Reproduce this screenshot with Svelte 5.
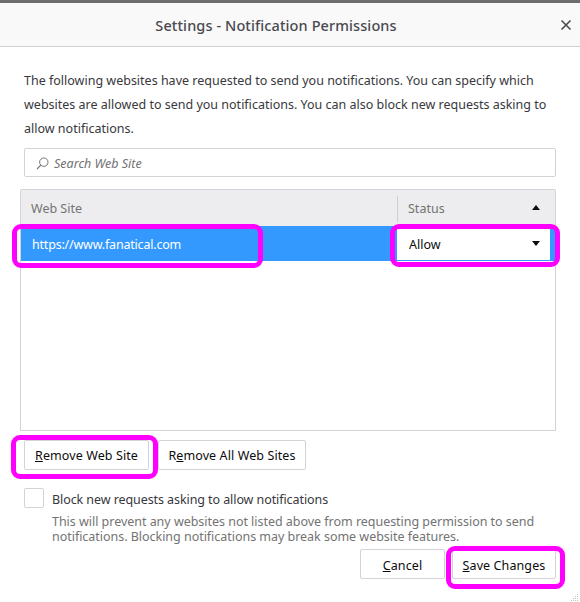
<script>
  const marks = [
    { x: 12, y: 221, w: 251, h: 44 },
    { x: 390, y: 221, w: 170, h: 43 },
    { x: 11, y: 432, w: 147, h: 44 },
    { x: 446, y: 543, w: 119, h: 43 }
  ];
</script>

<div class="dialog">
  <header class="head">
    <h1>Settings - Notification Permissions</h1>
    <svg class="close" width="12" height="12" viewBox="0 0 12 12" aria-hidden="true">
      <path d="M1.5 1.5 L10.5 10.5 M10.5 1.5 L1.5 10.5" stroke="#4a4a4f" stroke-width="1.6" fill="none" />
    </svg>
  </header>

  <main class="body">
    <p class="intro">The following websites have requested to send you notifications. You can specify which websites are allowed to send you notifications. You can also block new requests asking to allow notifications.</p>

    <div class="search">
      <svg width="13" height="13" viewBox="0 0 13 13" aria-hidden="true">
        <circle cx="7.8" cy="5.2" r="4.2" stroke="#737373" stroke-width="1" fill="none" />
        <path d="M4.8 8.2 L1 12" stroke="#737373" stroke-width="1.1" fill="none" />
      </svg>
      <span>Search Web Site</span>
    </div>

    <div class="table">
      <div class="thead">
        <div class="th site">Web Site</div>
        <div class="th status">
          <span>Status</span>
          <i class="up"></i>
        </div>
      </div>
      <div class="row">
        <div class="url">https://www.fanatical.com</div>
        <div class="select">
          <span>Allow</span>
          <i class="down"></i>
        </div>
      </div>
    </div>

    <div class="actions">
      <button><u>R</u>emove Web Site</button>
      <button class="all">R<u>e</u>move All Web Sites</button>
    </div>

    <div class="block">
      <span class="check"></span>
      <div>
        <div class="label">Block new requests asking to allow notifications</div>
        <div class="desc">This will prevent any websites not listed above from requesting permission to send notifications. Blocking notifications may break some website features.</div>
      </div>
    </div>

    <div class="foot">
      <button class="cancel"><u>C</u>ancel</button>
      <button class="save"><u>S</u>ave Changes</button>
    </div>
  </main>

  <svg class="grip" width="10" height="10" viewBox="0 0 10 10" aria-hidden="true">
    <g fill="#c4c4c8">
      <rect x="8" y="2" width="1" height="1" /><rect x="6" y="4" width="1" height="1" /><rect x="8" y="4" width="1" height="1" />
      <rect x="4" y="6" width="1" height="1" /><rect x="6" y="6" width="1" height="1" /><rect x="8" y="6" width="1" height="1" />
      <rect x="2" y="8" width="1" height="1" /><rect x="4" y="8" width="1" height="1" /><rect x="6" y="8" width="1" height="1" /><rect x="8" y="8" width="1" height="1" />
    </g>
  </svg>

  {#each marks as m}
    <div class="mark" style="left:{m.x}px;top:{m.y}px;width:{m.w}px;height:{m.h}px"></div>
  {/each}
</div>

<style>
  :global(body) {
    margin: 0;
    background: #fff;
  }
  .dialog {
    position: relative;
    width: 580px;
    height: 602px;
    overflow: hidden;
    background: #fff;
    border-top: 3px solid #6d6d70;
    box-sizing: border-box;
    font-family: "Noto Sans", "Open Sans", sans-serif;
    font-size: 12.5px;
    color: #38383d;
  }
  .head {
    height: 44px;
    box-sizing: border-box;
    background: #f9f9fa;
    border-bottom: 1px solid #d0d0d2;
    display: flex;
    align-items: center;
    justify-content: center;
    padding: 1px 28px 0 0;
    position: relative;
  }
  h1 {
    margin: 0;
    font-size: 14.5px;
    font-weight: 500;
    color: #4a4a4f;
    letter-spacing: 0.1px;
  }
  .close {
    position: absolute;
    left: 560px;
    top: 16px;
  }
  .body {
    padding: 22px 24px 0;
    display: flex;
    flex-direction: column;
  }
  .intro {
    margin: 0;
    line-height: 24px;
    height: 72px;
  }
  .search {
    margin-top: 7px;
    height: 29px;
    box-sizing: border-box;
    border: 1px solid #d2d2d8;
    border-radius: 2px;
    display: flex;
    align-items: center;
    gap: 5px;
    padding: 1px 0 0 11px;
    font-style: italic;
    color: #737373;
    font-size: 12.5px;
  }
  .table {
    margin: 12px 0 0 -4px;
    height: 242px;
    box-sizing: border-box;
    border: 1px solid #d2d2d8;
    border-radius: 2px 2px 0 0;
    display: flex;
    flex-direction: column;
  }
  .thead {
    display: flex;
    height: 36px;
    background: #ededf0;
    align-items: center;
    color: #737373;
  }
  .th.site {
    flex: 1;
    padding-left: 10px;
  }
  .th.status {
    width: 158px;
    box-sizing: border-box;
    height: 26px;
    margin-top: 1px;
    border-left: 1px solid #cfcfd3;
    padding: 0 15px 0 10px;
    display: flex;
    align-items: center;
    justify-content: space-between;
  }
  .up, .down {
    width: 0;
    height: 0;
    border-left: 4.5px solid transparent;
    border-right: 4.5px solid transparent;
  }
  .up { border-bottom: 5px solid #0c0c0d; margin-top: -2px; }
  .down { border-top: 5px solid #0c0c0d; }
  .row {
    display: flex;
    height: 35px;
    background: #3399ff;
    align-items: center;
    justify-content: space-between;
  }
  .url {
    color: #fff;
    padding: 2px 0 0 11px;
    letter-spacing: -0.2px;
  }
  .select {
    width: 153px;
    height: 32px;
    margin: 0 5px 0 0;
    box-sizing: border-box;
    background: #fff;
    display: flex;
    align-items: center;
    justify-content: space-between;
    padding: 0 10px 0 12px;
    color: #0c0c0d;
  }
  .select span { padding-top: 2px; }
  .actions {
    margin-top: 9px;
    display: flex;
    gap: 9px;
  }
  button {
    height: 30px;
    padding: 0;
    box-sizing: border-box;
    border: 1px solid #d2d2d8;
    border-radius: 2px;
    background: #fff;
    font: inherit;
    color: #0c0c0d;
    letter-spacing: 0.1px;
  }
  .actions button { width: 125px; }
  .actions button.all { width: 148px; }
  .block {
    margin-top: 18px;
    display: flex;
    gap: 8px;
  }
  .check {
    flex: none;
    width: 20px;
    height: 20px;
    box-sizing: border-box;
    border: 1px solid #d2d2d8;
    border-radius: 2px;
  }
  .label {
    line-height: 20px;
    margin-top: 2px;
    letter-spacing: -0.08px;
  }
  .desc {
    margin-top: 4px;
    line-height: 15px;
    color: #737373;
    letter-spacing: -0.03px;
  }
  .foot {
    margin-top: 5px;
    display: flex;
    justify-content: flex-end;
    gap: 7px;
  }
  .cancel { width: 85px; padding-top: 2px; }
  .save { width: 104px; padding-top: 2px; }
  .grip {
    position: absolute;
    right: 1px;
    bottom: 0;
  }
  .mark {
    position: absolute;
    box-sizing: border-box;
    border: 5px solid #ff00ff;
    border-radius: 9px;
  }
</style>
